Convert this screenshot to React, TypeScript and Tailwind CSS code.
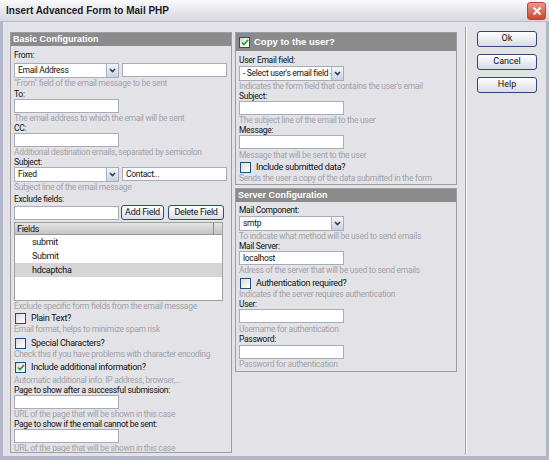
import type React from "react"

const narrow = "font-['Roboto','Liberation_Sans',sans-serif] tracking-[-0.3px]"

function Label({ children, className = "" }: { children: React.ReactNode; className?: string }) {
  return <div className={`h-[10px] leading-[10px] text-[8.5px] text-[#111] whitespace-nowrap ${className}`}>{children}</div>
}

function Hint({ children, className = "" }: { children: React.ReactNode; className?: string }) {
  return <div className={`h-[10px] leading-[10px] text-[8.5px] text-[#a2a2a8] whitespace-nowrap ${className}`}>{children}</div>
}

function Input({ value = "", className = "" }: { value?: string; className?: string }) {
  return (
    <div
      className={`h-[14px] w-[105px] border border-[#a7adb8] bg-white px-[3px] text-[8.5px] leading-[12px] text-[#111] whitespace-nowrap overflow-hidden ${className}`}
    >
      {value}
    </div>
  )
}

function Chevron() {
  return (
    <svg width="7" height="5" viewBox="0 0 7 5">
      <path d="M1 1 L3.5 3.5 L6 1" fill="none" stroke="#2b3a55" strokeWidth="1.6" />
    </svg>
  )
}

function Select({ value, className = "" }: { value: string; className?: string }) {
  return (
    <div className={`flex h-[15px] w-[105px] border border-[#a7adb8] bg-white ${className}`}>
      <div className="flex-1 overflow-hidden whitespace-nowrap px-[3px] text-[8.5px] leading-[13px] text-[#111]">{value}</div>
      <div className="flex w-[12px] items-center justify-center border-l border-[#a7b3cc] bg-gradient-to-b from-[#f3f5fb] to-[#c9d2e6]">
        <Chevron />
      </div>
    </div>
  )
}

function Check({ checked = false }: { checked?: boolean }) {
  return (
    <span className="flex h-[11px] w-[11px] shrink-0 items-center justify-center border border-[#1d5180] bg-gradient-to-br from-[#dcdcd6] to-white">
      {checked && (
        <svg width="8" height="7" viewBox="0 0 8 7">
          <path d="M1 3.5 L3 5.5 L7 1" fill="none" stroke="#22a122" strokeWidth="1.7" />
        </svg>
      )}
    </span>
  )
}

function CheckRow({ label, checked, className = "" }: { label: string; checked?: boolean; className?: string }) {
  return (
    <div className={`flex h-[12px] items-center gap-[5px] pl-[1px] ${className}`}>
      <Check checked={checked} />
      <span className="text-[9px] leading-[12px] text-[#111] whitespace-nowrap">{label}</span>
    </div>
  )
}

function SmallButton({ children, className = "" }: { children: React.ReactNode; className?: string }) {
  return (
    <div
      className={`flex h-[15px] items-center justify-center rounded-[3px] border border-[#2f4a78] bg-gradient-to-b from-white to-[#dedfe6] text-[9px] text-[#111] ${className}`}
    >
      {children}
    </div>
  )
}

function DialogButton({ children }: { children: React.ReactNode }) {
  return (
    <div className="flex h-[16px] w-[60px] items-center justify-center rounded-[3px] border border-[#2f4a78] bg-gradient-to-b from-white to-[#d9dbe6] text-[9px] text-[#111]">
      {children}
    </div>
  )
}

const fields = ["submit", "Submit", "hdcaptcha"]

export default function App() {
  return (
    <div className="h-[460px] w-[549px] overflow-hidden bg-[#e2e2e7] font-['Liberation_Sans',Arial,sans-serif]">
      {/* Title bar */}
      <div className="flex h-[22px] items-center justify-between border-b border-[#b9bccb] bg-gradient-to-b from-[#fafafc] to-[#d6d7e1] pl-[6px] pr-[3px]">
        <span className="text-[10px] font-bold text-[#1c1c1c]">Insert Advanced Form to Mail PHP</span>
        <div className="flex h-[18px] w-[19px] items-center justify-center rounded-[3px] border border-[#b14b3b] bg-gradient-to-b from-[#e9998a] to-[#c9442f]">
          <svg width="10" height="10" viewBox="0 0 10 10">
            <path d="M1.5 1.5 L8.5 8.5 M8.5 1.5 L1.5 8.5" stroke="white" strokeWidth="1.8" />
          </svg>
        </div>
      </div>

      {/* Body */}
      <div className={`flex h-[438px] border-x-[3px] border-b-[4px] border-[#b3b6c8] pl-[7px] pt-[10px] ${narrow}`}>
        {/* Basic configuration */}
        <div className="h-[421px] w-[222px] border border-[#9d9da2]">
          <div className="h-[13px] bg-[#8b8b8b] pl-[2px] font-['Liberation_Sans',Arial,sans-serif] text-[9px] font-bold leading-[13px] tracking-normal text-white">
            Basic Configuration
          </div>
          <div className="px-[3px]">
            <Label className="mt-[4px]">From:</Label>
            <div className="mt-[3px] flex gap-[3px]">
              <Select value="Email Address" className="h-[14px]" />
              <Input className="w-[105px]" />
            </div>
            <Hint>"From" field of the email message to be sent</Hint>
            <Label className="mt-[1px]">To:</Label>
            <Input />
            <Hint>The email address to which the email will be sent</Hint>
            <Label>CC:</Label>
            <Input />
            <Hint>Additional destination emails, separated by semicolon</Hint>
            <Label>Subject:</Label>
            <div className="flex gap-[3px]">
              <Select value="Fixed" className="h-[14px]" />
              <Input value="Contact..." className="w-[105px]" />
            </div>
            <Hint>Subject line of the email message</Hint>
            <Label className="mt-[2px]">Exclude fields:</Label>
            <div className="mt-[1px] flex items-center gap-[2px]">
              <Input className="w-[104px]" />
              <SmallButton className="w-[43px]">Add Field</SmallButton>
              <SmallButton className="ml-[2px] w-[56px]">Delete Field</SmallButton>
            </div>
            <div className="mt-[2px] h-[79px] w-[209px] border border-[#a0a0a4] bg-white">
              <div className="flex h-[12px] border-b border-[#9a9a9a] bg-gradient-to-b from-[#e4e4e4] to-[#c4c4c4]">
                <div className="flex-1 border-r border-[#8a8a8a] pl-[2px] text-[9px] leading-[12px] text-[#111]">Fields</div>
                <div className="w-[8px]" />
              </div>
              {fields.map((f, i) => (
                <div
                  key={f}
                  className={`h-[14px] pl-[17px] text-[9px] leading-[14px] text-[#111] ${i === 2 ? "bg-[#d5d5d7]" : ""}`}
                >
                  {f}
                </div>
              ))}
            </div>
            <Hint>Exclude specific form fields from the email message</Hint>
            <CheckRow label="Plain Text?" className="mt-[1px]" />
            <Hint>Email format, helps to minimize spam risk</Hint>
            <CheckRow label="Special Characters?" className="mt-[3px]" />
            <Hint>Check this if you have problems with character encoding</Hint>
            <CheckRow label="Include additional information?" className="mt-[2px]" checked />
            <Hint className="mt-[2px]">Automatic additional info: IP address, browser,...</Hint>
            <Label>Page to show after a successful submission:</Label>
            <Input />
            <Hint>URL of the page that will be shown in this case</Hint>
            <Label>Page to show if the email cannot be sent:</Label>
            <Input />
            <Hint>URL of the page that will be shown in this case</Hint>
          </div>
        </div>

        {/* Right column */}
        <div className="ml-[3px] flex w-[222px] flex-col">
          <div className="h-[153px] border border-[#9d9da2]">
            <div className="flex h-[18px] items-center gap-[4px] bg-[#8b8b8b] pl-[3px]">
              <Check checked />
              <span className="font-['Liberation_Sans',Arial,sans-serif] text-[9.5px] font-bold tracking-normal text-white">Copy to the user?</span>
            </div>
            <div className="px-[3px]">
              <Label className="mt-[4px]">User Email field:</Label>
              <Select value="- Select user's email field -" className="mt-[1px]" />
              <Hint>Indicates the form field that contains the user's email</Hint>
              <Label>Subject:</Label>
              <Input />
              <Hint>The subject line of the email to the user</Hint>
              <Label>Message:</Label>
              <Input />
              <Hint className="mt-[1px]">Message that will be sent to the user</Hint>
              <CheckRow label="Include submitted data?" className="mt-[1px]" />
              <Hint>Sends the user a copy of the data submitted in the form</Hint>
            </div>
          </div>

          <div className="mt-[3px] h-[184px] border border-[#9d9da2]">
            <div className="h-[13px] bg-[#8b8b8b] pl-[2px] font-['Liberation_Sans',Arial,sans-serif] text-[9px] font-bold leading-[13px] tracking-normal text-white">
              Server Configuration
            </div>
            <div className="px-[3px]">
              <Label className="mt-[3px]">Mail Component:</Label>
              <Select value="smtp" className="mt-[1px]" />
              <Hint>To indicate what method will be used to send emails</Hint>
              <Label>Mail Server:</Label>
              <Input value="localhost" />
              <Hint>Adress of the server that will be used to send emails</Hint>
              <CheckRow label="Authentication required?" className="mt-[2px]" />
              <Hint>Indicates if the server requires authentication</Hint>
              <Label>User:</Label>
              <Input />
              <Hint className="mt-[1px]">Username for authentication</Hint>
              <Label>Password:</Label>
              <Input className="mt-[1px]" />
              <Hint>Password for authentication</Hint>
            </div>
          </div>
        </div>

        {/* Separator */}
        <div className="ml-[8px] mt-[-5px] h-[428px] w-[2px] border-l border-r border-l-[#a4a4aa] border-r-[#fbfbfd]" />

        {/* Buttons */}
        <div className="ml-[10px] mt-[-1px] flex flex-col gap-[7px] tracking-normal">
          <DialogButton>Ok</DialogButton>
          <DialogButton>Cancel</DialogButton>
          <DialogButton>Help</DialogButton>
        </div>
      </div>
    </div>
  )
}
